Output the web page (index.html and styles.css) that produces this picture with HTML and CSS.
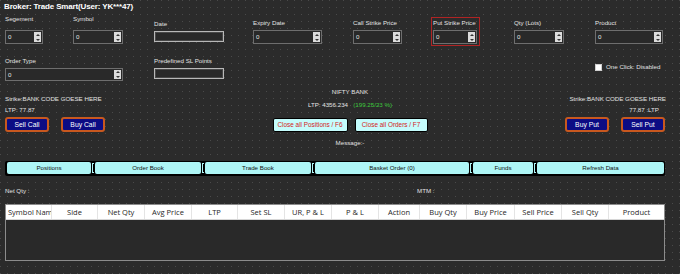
FILE: index.html
```html
<!DOCTYPE html>
<html lang="en">
<head>
    <meta charset="UTF-8">
    <title>Trade Smart</title>
    <link rel="stylesheet" href="styles.css">
</head>
<body>
    <div class="title">Broker: Trade Smart(User: YK***47)</div>

    <div class="fields">
        <div class="field hi">
            <label>Segement</label>
            <div class="num w38"><span class="val">0</span><span class="spin"></span></div>
        </div>
        <div class="field hi">
            <label>Symbol</label>
            <div class="num w50"><span class="val">0</span><span class="spin"></span></div>
        </div>
        <div class="field">
            <label>Date</label>
            <div class="box"></div>
        </div>
        <div class="field">
            <label>Expiry Date</label>
            <div class="num w69"><span class="val">0</span><span class="spin"></span></div>
        </div>
        <div class="field">
            <label>Call Strike Price</label>
            <div class="num w49"><span class="val">0</span><span class="spin"></span></div>
        </div>
        <div class="field put">
            <label>Put Strike Price</label>
            <div class="num w44"><span class="val">0</span><span class="spin"></span></div>
        </div>
        <div class="field">
            <label>Qty (Lots)</label>
            <div class="num w50"><span class="val">0</span><span class="spin"></span></div>
        </div>
        <div class="field">
            <label>Product</label>
            <div class="num w68"><span class="val">0</span><span class="spin"></span></div>
        </div>
    </div>

    <div class="fields row2">
        <div class="field wide">
            <label>Order Type</label>
            <div class="num"><span class="val">0</span><span class="spin"></span></div>
        </div>
        <div class="field">
            <label>Predefined SL Points</label>
            <div class="box"></div>
        </div>
        <div class="check">
            <span class="tick"></span>
            <span>One Click: Disabled</span>
        </div>
    </div>

    <div class="quote">
        <div class="side">
            <div>Strike:BANK CODE GOESE HERE</div>
            <div class="ltp">LTP: 77.87</div>
            <div class="btns">
                <button class="trade-btn">Sell Call</button>
                <button class="trade-btn">Buy Call</button>
            </div>
        </div>
        <div class="center">
            <div>NIFTY BANK</div>
            <div class="ltp">LTP: 4356.234 &nbsp;&nbsp;<span class="chg">(199.25/23 %)</span></div>
            <div class="close-row">
                <button class="close-btn pos">Close all Positions / F6</button>
                <button class="close-btn ord">Close all Orders / F7</button>
            </div>
            <div class="msg">Message:-</div>
        </div>
        <div class="side right">
            <div>Strike:BANK CODE GOESE HERE</div>
            <div class="ltp">77.87 :LTP</div>
            <div class="btns">
                <button class="trade-btn">Buy Put</button>
                <button class="trade-btn">Sell Put</button>
            </div>
        </div>
    </div>

    <div class="tabs">
        <div class="tab t1">Positions</div>
        <div class="tab t2">Order Book</div>
        <div class="tab t2">Trade Book</div>
        <div class="tab t4">Basket Order (0)</div>
        <div class="tab t5">Funds</div>
        <div class="tab t6">Refresh Data</div>
    </div>

    <div class="totals">
        <div>Net Qty :</div>
        <div>MTM :</div>
    </div>

    <div class="grid-table">
        <div class="thead">
            <div class="th first">Symbol Name</div>
            <div class="th">Side</div>
            <div class="th">Net Qty</div>
            <div class="th">Avg Price</div>
            <div class="th">LTP</div>
            <div class="th">Set SL</div>
            <div class="th">UR, P &amp; L</div>
            <div class="th">P &amp; L</div>
            <div class="th">Action</div>
            <div class="th">Buy Qty</div>
            <div class="th">Buy Price</div>
            <div class="th">Sell Price</div>
            <div class="th">Sell Qty</div>
            <div class="th">Product</div>
        </div>
        <div class="tbody"></div>
    </div>
</body>
</html>
```

FILE: styles.css
```css
body {
    margin: 0;
    width: 680px;
    height: 274px;
    overflow: hidden;
    background-color: #2b2b2b;
    background-image:
        linear-gradient(to bottom, transparent 1px, #2b2b2b 1px),
        linear-gradient(to right, #4a4a4a 1px, transparent 1px);
    background-size: 7px 7px;
    font-family: "Liberation Sans", Arial, sans-serif;
    font-size: 6.2px;
    line-height: 8px;
    color: #e2e2e2;
}

.title {
    padding: 2px 0 0 4px;
    font-weight: bold;
    font-size: 8px;
    line-height: 9px;
    letter-spacing: -0.15px;
    color: #fff;
}

/* input rows */
.fields {
    display: grid;
    grid-template-columns: 68px 81px 99px 100px 80px 81px 81px 70px;
    padding-left: 5px;
    margin-top: 4px;
}

.field {
    display: flex;
    flex-direction: column;
    justify-content: flex-end;
    height: 29px;
}

.field label {
    display: block;
    margin-bottom: 3px;
    white-space: nowrap;
}

.field.hi label {
    margin-bottom: 7px;
}

.field.put {
    align-self: end;
    height: auto;
    width: 45px;
    outline: 1px solid #b02424;
    outline-offset: 1px;
}

.num {
    display: flex;
    height: 14px;
    box-sizing: border-box;
    border: 1px solid #6e6e6e;
    background: #292929;
}

.num .val {
    flex: 1;
    padding-left: 2px;
    line-height: 12px;
    color: #e6e6e6;
}

.spin {
    width: 7px;
    margin: 1px;
    background: #dcdcdc;
    display: flex;
    flex-direction: column;
    align-items: center;
    justify-content: space-around;
}

.spin::before {
    content: "";
    border: 2px solid transparent;
    border-top: 0;
    border-bottom: 2px solid #333;
}

.spin::after {
    content: "";
    border: 2px solid transparent;
    border-bottom: 0;
    border-top: 2px solid #333;
}

.w38 { width: 38px; }
.w44 { width: 44px; }
.w49 { width: 49px; }
.w50 { width: 50px; }
.w68 { width: 68px; }
.w69 { width: 69px; }

.box {
    width: 70px;
    height: 11px;
    margin-bottom: 2px;
    box-sizing: border-box;
    border: 1px solid #b8b8b8;
    box-shadow: inset 0 0 0 1px #484848;
    background: #292929;
}

.row2 {
    margin-top: 13px;
}

.row2 .field {
    height: auto;
    justify-content: flex-start;
}

.row2 .wide {
    grid-column: span 2;
}

.row2 .wide .num {
    width: 118px;
    height: 13px;
}

.row2 .wide .val {
    line-height: 11px;
}

.check {
    grid-column: 8 / 9;
    align-self: start;
    display: flex;
    align-items: center;
    gap: 4px;
    margin-top: 6px;
    white-space: nowrap;
}

.tick {
    width: 7px;
    height: 7px;
    box-sizing: border-box;
    background: #fff;
    border: 1px solid #cfcfcf;
}

/* quote area */
.quote {
    display: grid;
    grid-template-columns: 260px 170px 1fr;
    padding: 0 14px 0 5px;
    margin-top: 6px;
}

.side {
    padding-top: 7.5px;
    display: flex;
    flex-direction: column;
    white-space: nowrap;
}

.side .ltp {
    margin-top: 3px;
}

.btns {
    margin-top: 3.5px;
    display: flex;
    gap: 12px;
}

.side.right {
    align-items: flex-end;
}

.side.right .ltp {
    padding-right: 7px;
}

.side.right .btns {
    margin-right: 1px;
}

.trade-btn {
    width: 44px;
    height: 15px;
    box-sizing: border-box;
    padding: 0;
    background: #0c0c84;
    border: 2px solid #c8581f;
    border-radius: 3px;
    color: #fff;
    font-family: "Liberation Sans", Arial, sans-serif;
    font-size: 6.8px;
    line-height: 11px;
}

.center {
    padding-top: 0.5px;
    display: flex;
    flex-direction: column;
    align-items: center;
    white-space: nowrap;
}

.center .ltp {
    margin-top: 5px;
}

.chg {
    color: #3cc83c;
}

.close-row {
    margin-top: 9.5px;
    display: flex;
    gap: 7px;
}

.close-btn {
    height: 14px;
    box-sizing: border-box;
    padding: 0;
    background: #c4fcfc;
    border: 1px solid #000;
    border-radius: 2px;
    color: #d42222;
    font-family: "Liberation Sans", Arial, sans-serif;
    font-size: 6.4px;
    line-height: 12px;
}

.close-btn.pos { width: 75px; }
.close-btn.ord { width: 73px; }

.msg {
    margin-top: 6.5px;
}

/* tab strip */
.tabs {
    display: flex;
    gap: 4px;
    margin: 14.5px 15px 0 5px;
    padding: 1px 1px 2px 2px;
    background: #000;
    border-radius: 2px;
}

.tab {
    position: relative;
    height: 12px;
    background: #aef6f6;
    border-radius: 2px;
    color: #111;
    text-align: center;
    line-height: 12px;
}

.tab + .tab::before {
    content: "";
    position: absolute;
    left: -3px;
    top: 1px;
    bottom: 1px;
    width: 1px;
    border: 1px solid #aef6f6;
    border-right: 0;
}

.t1 { width: 84px; }
.t2 { width: 106px; }
.t4 { width: 154px; }
.t5 { width: 60px; }
.t6 { flex: 1; }

.totals {
    display: grid;
    grid-template-columns: 412px auto;
    padding-left: 5px;
    margin-top: 10.5px;
}

/* positions grid */
.grid-table {
    margin: 9.5px 0 0 5px;
    width: 660px;
    box-sizing: border-box;
    border: 1px solid #8c8c8c;
}

.thead {
    display: grid;
    grid-template-columns: 46px 46px 47px 47px 46px 47px 47px 47px 41px 47px 48px 47px 47px 1fr;
    height: 14px;
    background: #fff;
    border-bottom: 1px solid #d6d6d6;
}

.th {
    border-right: 1px solid #e4e4e4;
    text-align: center;
    white-space: nowrap;
    overflow: hidden;
    font-family: "Open Sans", "Noto Sans", sans-serif;
    font-size: 7.5px;
    line-height: 14px;
    color: #262626;
}

.th.first {
    text-align: left;
    padding-left: 2px;
}

.th:last-child {
    border-right: 0;
}

.tbody {
    height: 40px;
    background: #292929;
}
```
